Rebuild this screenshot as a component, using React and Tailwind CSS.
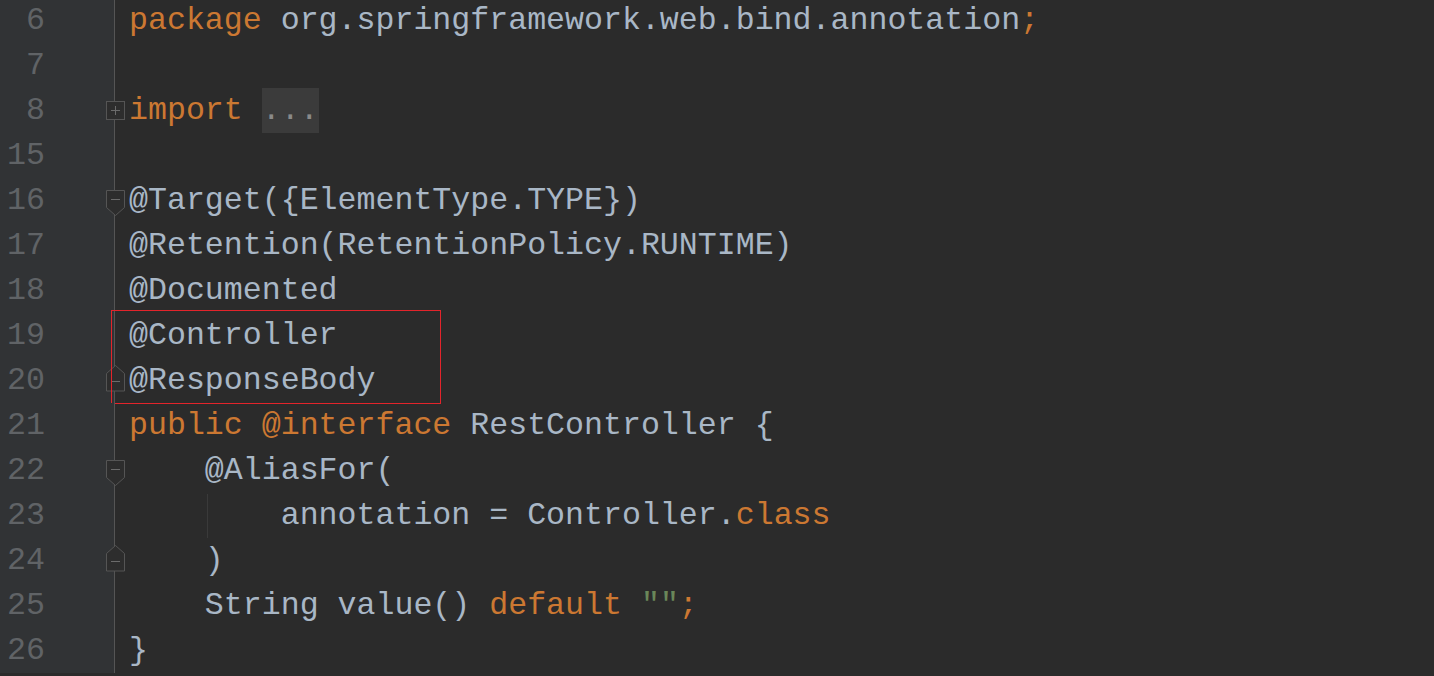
import React from "react";

const K = "text-[#cc7832]";
const S = "text-[#6a8759]";

const FoldDown = () => (
  <svg className="absolute left-[106px] top-[12px]" width="19" height="27" viewBox="0 0 19 27">
    <path d="M0.5 0.5 H18.5 V17.5 L9.5 25.5 L0.5 17.5 Z" fill="#2d2d2d" stroke="#555555" strokeWidth="1" />
    <path d="M5 9.5 H14" stroke="#6b6b6b" strokeWidth="1" />
  </svg>
);

const FoldUp = () => (
  <svg className="absolute left-[106px] top-[7px]" width="19" height="27" viewBox="0 0 19 27">
    <path d="M9.5 0.5 L18.5 8.5 V26 H0.5 V8.5 Z" fill="#2d2d2d" stroke="#555555" strokeWidth="1" />
    <path d="M5 16.5 H14" stroke="#6b6b6b" strokeWidth="1" />
  </svg>
);

const FoldPlus = () => (
  <svg className="absolute left-[106px] top-[13px]" width="19" height="19" viewBox="0 0 19 19">
    <rect x="0.5" y="0.5" width="18" height="18" fill="#2d2d2d" stroke="#555555" strokeWidth="1" />
    <path d="M5 9.5 H14 M9.5 5 V14" stroke="#6b6b6b" strokeWidth="1" />
  </svg>
);

const Row = ({ n, marker, children, extra }) => (
  <div className="relative flex h-[45px]">
    <div className="w-[115px] shrink-0 bg-[#313335] border-r border-[#555555] pr-[69px] text-right text-[#606366] leading-[45px]">
      {n}
    </div>
    <div className="pl-[14px] leading-[45px] whitespace-pre text-[#a9b7c6]">{children}</div>
    {marker === "down" && <FoldDown />}
    {marker === "up" && <FoldUp />}
    {marker === "plus" && <FoldPlus />}
    {extra}
  </div>
);

export default function App() {
  return (
    <div
      className="w-[1434px] h-[676px] overflow-hidden bg-[#2b2b2b] text-[31.6px]"
      style={{ fontFamily: '"Liberation Mono", "Courier New", monospace' }}
    >
      <div className="-mt-[2px] flex flex-col">
        <Row n="6">
          <span className={K}>package</span> org.springframework.web.bind.annotation<span className={K}>;</span>
        </Row>
        <Row n="7" />
        <Row n="8" marker="plus">
          <span className={K}>import</span>{" "}
          <span className="inline-block h-[45px] bg-[#3b3b3b] text-[#8a8a8a] align-top">...</span>
        </Row>
        <Row n="15" />
        <Row n="16" marker="down">{"@Target({ElementType.TYPE})"}</Row>
        <Row n="17">@Retention(RetentionPolicy.RUNTIME)</Row>
        <Row n="18">@Documented</Row>
        <div className="relative">
          <Row n="19">@Controller</Row>
          <Row n="20" marker="up">@ResponseBody</Row>
          <div className="absolute left-[111px] top-[-3.5px] w-[330px] h-[94px] border border-[#e3242b] pointer-events-none" />
        </div>
        <Row n="21">
          <span className={K}>public @interface</span> RestController {"{"}
        </Row>
        <Row n="22" marker="down">{"    "}@AliasFor(</Row>
        <Row
          n="23"
          extra={<div className="absolute left-[207px] top-[1px] w-px h-[44px] bg-[#3a3a3a]" />}
        >
          {"        "}annotation = Controller.<span className={K}>class</span>
        </Row>
        <Row n="24" marker="up">{"    "})</Row>
        <Row n="25">
          {"    "}String value() <span className={K}>default</span> <span className={S}>""</span>
          <span className={K}>;</span>
        </Row>
        <Row n="26">{"}"}</Row>
      </div>
    </div>
  );
}
